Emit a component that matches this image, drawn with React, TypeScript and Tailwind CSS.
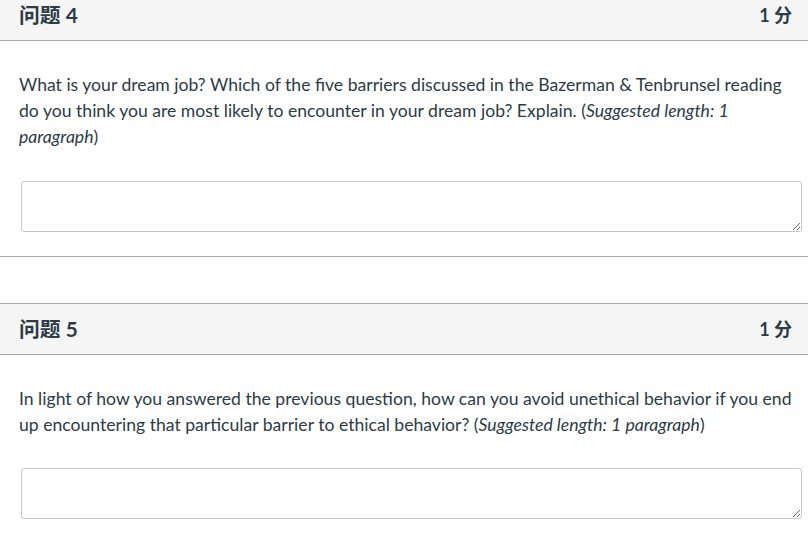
import React from "react";

function Question({
  num,
  tight,
  children,
}: {
  num: number;
  tight?: boolean;
  children: React.ReactNode;
}) {
  return (
    <div className="border-b border-[#a9a9a9] bg-white">
      <div className="flex h-[51px] items-center justify-between border-b border-[#a9a9a9] bg-[#f5f5f5] pl-[19px] pr-[16px]">
        <div className="text-[20.8px] font-bold text-[#2d3b45]">问题 {num}</div>
        <div className="text-[18px] font-bold text-[#2d3b45]">1 分</div>
      </div>
      <div className="pt-[31px] pb-[24px]">
        <div className="pl-[19px] pr-[6px] text-[17.6px] leading-[26px] text-[#2d3b45]">
          {children}
        </div>
        <div className={tight ? "mt-[30px] pl-[21px] pr-[6px]" : "mt-[31px] pl-[21px] pr-[6px]"}>
          <textarea className="block h-[51px] w-full rounded-[3px] border border-[#c7c7c7] bg-white" />
        </div>
      </div>
    </div>
  );
}

export default function App() {
  return (
    <div
      className="h-[537px] w-[808px] overflow-hidden bg-white"
      style={{ fontFamily: 'Lato, "Noto Sans CJK SC", sans-serif' }}
    >
      <div className="-mt-[10px]">
        <Question num={4}>
          What is your dream job? Which of the five barriers discussed in the
          Bazerman &amp; Tenbrunsel reading do you think you are most likely to
          encounter in your dream job? Explain. (<i>Suggested length: 1 paragraph</i>)
        </Question>
        <div className="h-[46px]" />
        <div className="border-t border-[#a9a9a9]">
          <Question num={5} tight>
            In light of how you answered the previous question, how can you
            avoid unethical behavior if you end up encountering that particular
            barrier to ethical behavior? (<i>Suggested length: 1 paragraph</i>)
          </Question>
        </div>
      </div>
    </div>
  );
}
